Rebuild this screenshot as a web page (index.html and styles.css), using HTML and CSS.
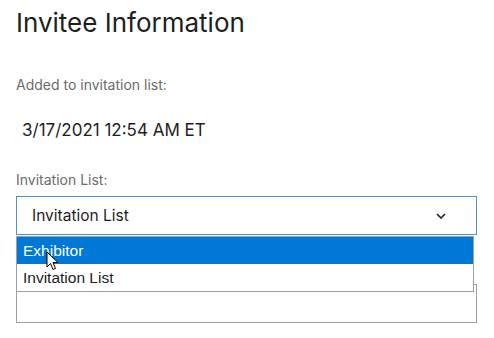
FILE: index.html
```html
<!DOCTYPE html>
<html>
<head>
<meta charset="utf-8">
<link rel="stylesheet" href="styles.css">
</head>
<body>
<div class="page">
  <h1 class="title">Invitee Information</h1>
  <div class="label label-added">Added to invitation list:</div>
  <div class="date">3/17/2021 12:54 AM ET</div>
  <div class="label label-list">Invitation List:</div>
  <div class="field">
    <div class="select">
      <span class="select-text">Invitation List</span>
      <svg class="chevron" width="10" height="6" viewBox="0 0 10 6"><path d="M1 1 L5 5 L9 1" fill="none" stroke="#222" stroke-width="1.6"/></svg>
    </div>
    <div class="dropdown">
      <div class="option active">Exhibitor</div>
      <div class="option">Invitation List</div>
    </div>
    <svg class="cursor" width="14" height="22" viewBox="0 0 14 22"><path d="M1 1 L1 16 L4.5 12.5 L7 18.5 L9.5 17.5 L7 11.5 L12 11.5 Z" fill="#fff" stroke="#000" stroke-width="1"/></svg>
  </div>
  <div class="textbox"></div>
</div>
</body>
</html>
```
FILE: styles.css
```css
html, body { margin: 0; padding: 0; background: #fff; }
.page { padding: 7px 17px 0 16px; font-family: "Inter", "DejaVu Sans", sans-serif; color: #222; }
.title { margin: 0; font-size: 26px; font-weight: 400; line-height: 32px; color: #1e1e1e; }
.label { font-size: 14px; color: #6b6b6b; line-height: 18px; }
.label-added { margin-top: 37px; }
.date { margin-top: 25px; padding-left: 6px; font-size: 17px; line-height: 22px; color: #1e1e1e; }
.label-list { margin-top: 30px; }
.field { position: relative; margin-top: 7px; }
.select { height: 37px; border: 1px solid #4a90e2; display: flex; align-items: center; justify-content: space-between; padding: 0 30px 0 15px; font-size: 15.5px; color: #1e1e1e; }
.chevron { display: block; }
.dropdown { position: absolute; left: 0; top: 40px; width: 456px; border: 1px solid #a0a0a0; background: #fff; z-index: 2; font-family: "Liberation Sans", Arial, sans-serif; font-size: 15.5px; }
.option { height: 27px; line-height: 28px; padding-left: 6px; color: #222; }
.option.active { background: #0078d7; color: #fff; }
.cursor { position: absolute; left: 30px; top: 55px; z-index: 3; }
.textbox { margin-top: 49px; height: 37px; border: 1px solid #a0a0a0; }
```
